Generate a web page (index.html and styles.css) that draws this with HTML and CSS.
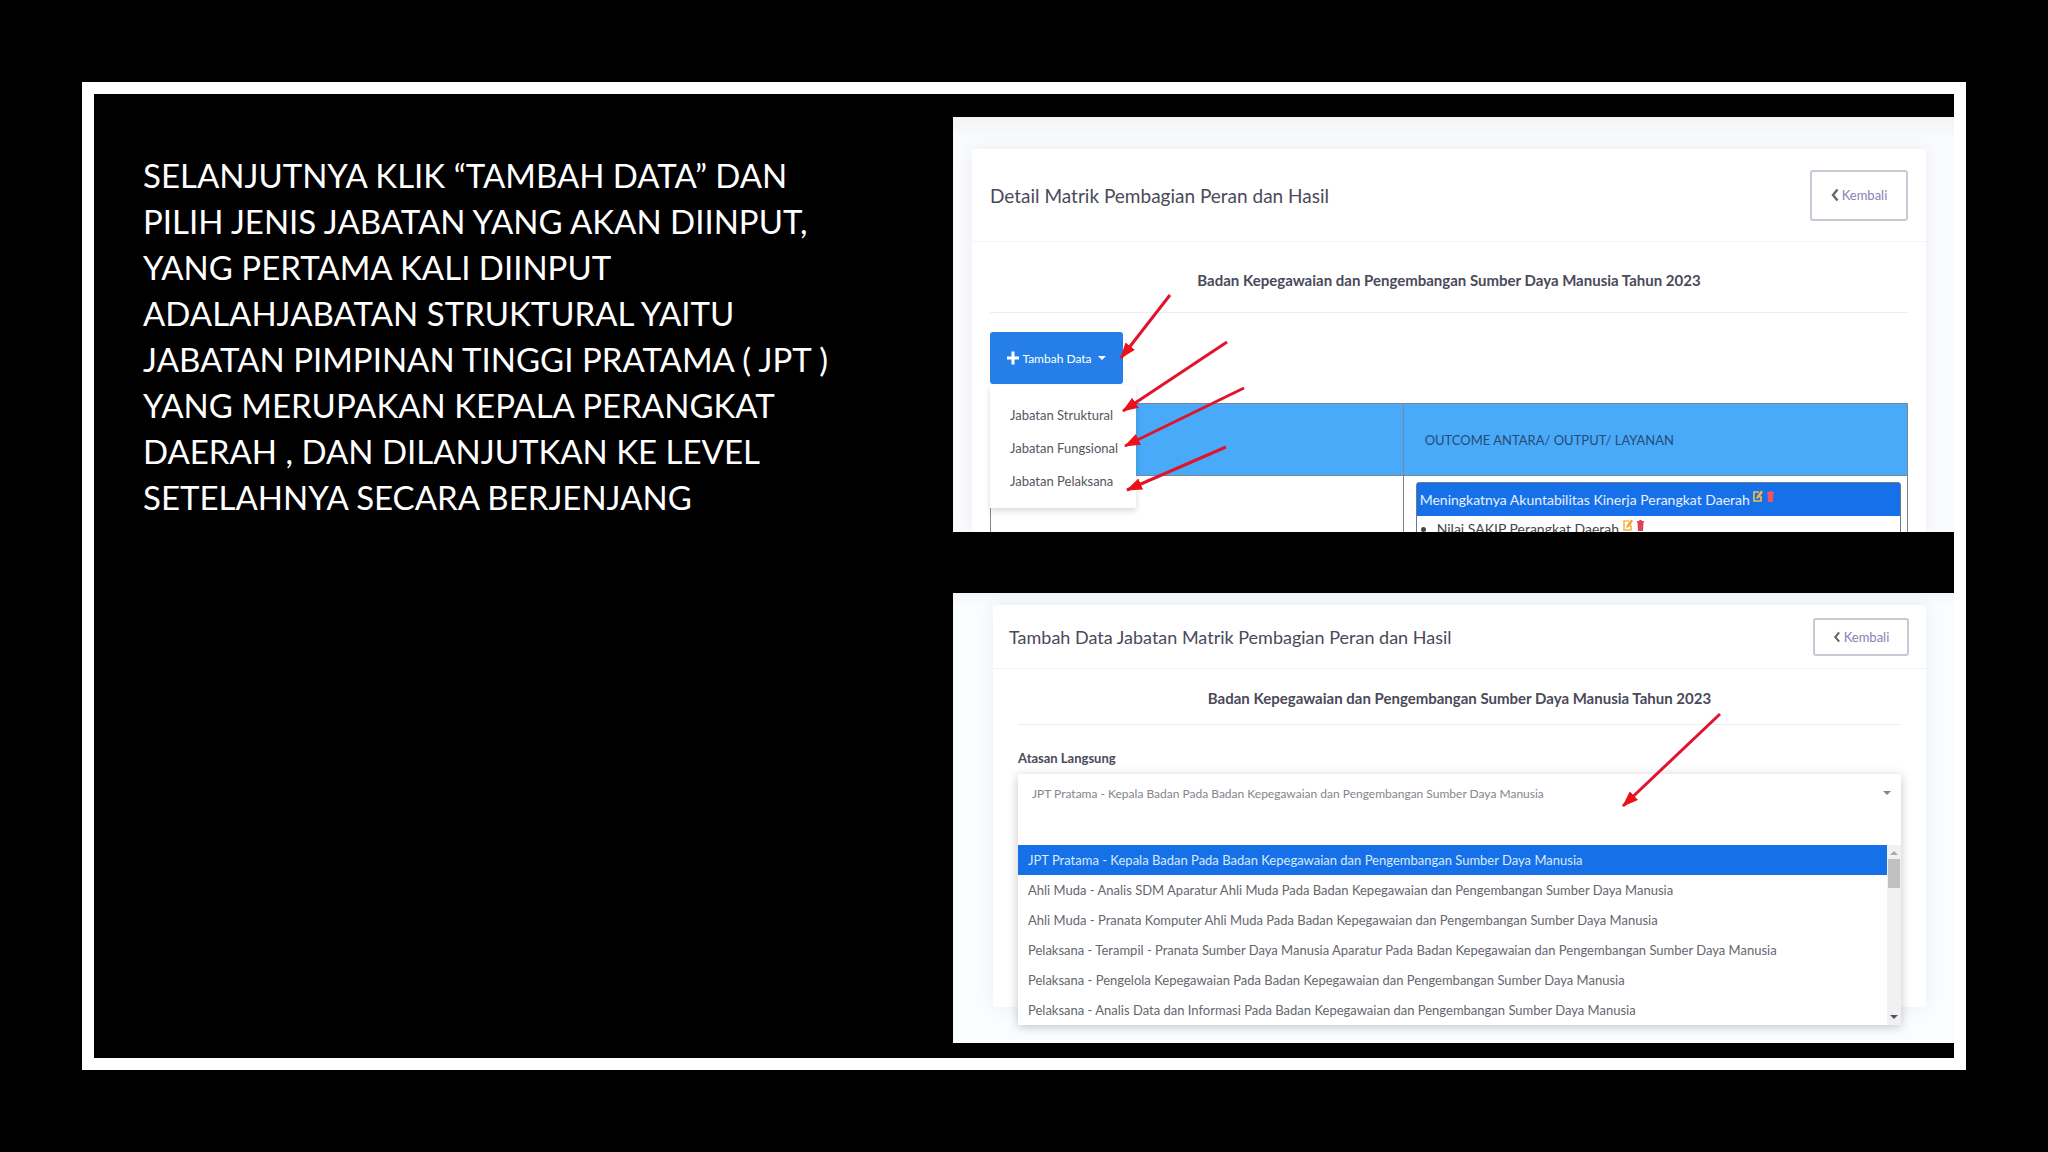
FILE: index.html
```html
<!DOCTYPE html>
<html lang="id">
<head>
    <meta charset="UTF-8">
    <meta name="viewport" content="width=device-width, initial-scale=1.0">
    <title>Tambah Data Jabatan</title>
    <link rel="stylesheet" href="styles.css">
</head>
<body>
    <main class="frame">
        <p class="instruction">
            SELANJUTNYA KLIK “TAMBAH DATA” DAN<br>
            PILIH JENIS JABATAN YANG AKAN DIINPUT,<br>
            YANG PERTAMA KALI DIINPUT<br>
            ADALAHJABATAN STRUKTURAL YAITU<br>
            JABATAN PIMPINAN TINGGI PRATAMA ( JPT )<br>
            YANG MERUPAKAN KEPALA PERANGKAT<br>
            DAERAH , DAN DILANJUTKAN KE LEVEL<br>
            SETELAHNYA SECARA BERJENJANG
        </p>

        <div class="shots">
            <!-- Detail matrik -->
            <section class="shot shot-detail">
                <div class="card">
                    <div class="card-header">
                        <h1>Detail Matrik Pembagian Peran dan Hasil</h1>
                        <button class="btn-back" type="button">
                            <svg viewBox="0 0 8 14" width="8" height="14"><path d="M6.5 1.5 L2 7 L6.5 12.5" fill="none" stroke="currentColor" stroke-width="2.4"/></svg>
                            Kembali
                        </button>
                    </div>
                    <div class="card-body">
                        <h2>Badan Kepegawaian dan Pengembangan Sumber Daya Manusia Tahun 2023</h2>
                        <div class="dropdown">
                            <button class="btn-add" type="button">
                                <svg viewBox="0 0 12 14" width="12" height="14"><path d="M6 0.5 V13.5 M0 7 H12" stroke="currentColor" stroke-width="3"/></svg>
                                Tambah Data
                                <span class="caret"></span>
                            </button>
                            <div class="dropdown-menu">
                                <a href="#">Jabatan Struktural</a>
                                <a href="#">Jabatan Fungsional</a>
                                <a href="#">Jabatan Pelaksana</a>
                            </div>
                        </div>
                        <table class="matrix">
                            <thead>
                                <tr>
                                    <th></th>
                                    <th>OUTCOME ANTARA/ OUTPUT/ LAYANAN</th>
                                </tr>
                            </thead>
                            <tbody>
                                <tr>
                                    <td></td>
                                    <td>
                                        <div class="outcome">
                                            <div class="outcome-title">
                                                Meningkatnya Akuntabilitas Kinerja Perangkat Daerah
                                                <svg class="icon" viewBox="0 0 22 12" width="22" height="12"><path d="M6 2 H1 V11 H8 V6" fill="none" stroke="#f2c14b" stroke-width="1.6"/><path d="M3 9 L4 6 L8 0.5 L10 2 L6 8 Z" fill="#f2b632"/><path d="M14 2 H16 L16.5 1 H18.500 L19 2 H21 V3.5 H14 Z M14.500 3.5 H20.500 L20 12 H15 Z" fill="#ea5463"/></svg>
                                            </div>
                                            <ul>
                                                <li>
                                                    Nilai SAKIP Perangkat Daerah
                                                    <svg class="icon" viewBox="0 0 22 12" width="22" height="12"><path d="M6 2 H1 V11 H8 V6" fill="none" stroke="#f2b64b" stroke-width="1.6"/><path d="M3 9 L4 6 L8 0.5 L10 2 L6 8 Z" fill="#f2a632"/><path d="M14 2 H16 L16.5 1 H18.500 L19 2 H21 V3.5 H14 Z M14.500 3.5 H20.500 L20 12 H15 Z" fill="#dc4355"/></svg>
                                                </li>
                                            </ul>
                                        </div>
                                    </td>
                                </tr>
                            </tbody>
                        </table>
                    </div>
                </div>
                <svg class="arrows" viewBox="0 0 1001 415">
                    <defs>
                        <marker id="head" viewBox="0 0 16 12" refX="15" refY="6" markerWidth="16" markerHeight="12" markerUnits="userSpaceOnUse" orient="auto">
                            <path d="M0 0 L16 6 L0 12 Z" fill="#ee1018"/>
                        </marker>
                    </defs>
                    <path d="M217 178 L168 241" marker-end="url(#head)"/>
                    <path d="M274 225 L170 294" marker-end="url(#head)"/>
                    <path d="M291 271 L172 329" marker-end="url(#head)"/>
                    <path d="M273 330 L174 373" marker-end="url(#head)"/>
                </svg>
            </section>

            <!-- Form tambah data -->
            <section class="shot shot-form">
                <div class="card">
                    <div class="card-header">
                        <h1>Tambah Data Jabatan Matrik Pembagian Peran dan Hasil</h1>
                        <button class="btn-back" type="button">
                            <svg viewBox="0 0 8 14" width="8" height="12"><path d="M6.5 1.5 L2 7 L6.5 12.5" fill="none" stroke="currentColor" stroke-width="2.4"/></svg>
                            Kembali
                        </button>
                    </div>
                    <div class="card-body">
                        <h2>Badan Kepegawaian dan Pengembangan Sumber Daya Manusia Tahun 2023</h2>
                        <label for="atasan">Atasan Langsung</label>
                        <div class="picker">
                            <div class="picker-control">
                                <select id="atasan">
                                    <option>JPT Pratama - Kepala Badan Pada Badan Kepegawaian dan Pengembangan Sumber Daya Manusia</option>
                                </select>
                                <span class="caret"></span>
                            </div>
                            <input class="picker-search" type="text" aria-label="Cari">
                            <div class="picker-list">
                                <ul role="listbox" aria-label="Atasan Langsung">
                                    <li role="option" class="active" aria-selected="true">JPT Pratama - Kepala Badan Pada Badan Kepegawaian dan Pengembangan Sumber Daya Manusia</li>
                                    <li role="option">Ahli Muda - Analis SDM Aparatur Ahli Muda Pada Badan Kepegawaian dan Pengembangan Sumber Daya Manusia</li>
                                    <li role="option">Ahli Muda - Pranata Komputer Ahli Muda Pada Badan Kepegawaian dan Pengembangan Sumber Daya Manusia</li>
                                    <li role="option">Pelaksana - Terampil - Pranata Sumber Daya Manusia Aparatur Pada Badan Kepegawaian dan Pengembangan Sumber Daya Manusia</li>
                                    <li role="option">Pelaksana - Pengelola Kepegawaian Pada Badan Kepegawaian dan Pengembangan Sumber Daya Manusia</li>
                                    <li role="option">Pelaksana - Analis Data dan Informasi Pada Badan Kepegawaian dan Pengembangan Sumber Daya Manusia</li>
                                </ul>
                                <div class="scrollbar">
                                    <span class="caret up"></span>
                                    <span class="thumb"></span>
                                    <span class="caret down"></span>
                                </div>
                            </div>
                        </div>
                    </div>
                </div>
                <svg class="arrows" viewBox="0 0 1001 450">
                    <path d="M767 121 L670 213" marker-end="url(#head)"/>
                </svg>
            </section>
        </div>
    </main>
</body>
</html>
```
FILE: styles.css
```css
* {
    margin: 0;
    padding: 0;
    box-sizing: border-box;
}

body {
    font-family: Lato, Carlito, sans-serif;
    background: #000;
    color: #4a4a5a;
    height: 100vh;
    padding: 82px;
    display: flex;
}

button, input, select {
    font-family: inherit;
}

.frame {
    flex: 1;
    border: 12px solid #fff;
    display: grid;
    grid-template-columns: 859fr 1001fr;
    grid-template-rows: minmax(0, 1fr);
}

.instruction {
    padding: 58px 0 0 49px;
    color: #fff;
    font-size: 33px;
    line-height: 46px;
    white-space: nowrap;
}

.shots {
    display: grid;
    grid-template-rows: minmax(0, 415fr) minmax(0, 450fr);
    gap: 61px;
    padding: 23px 0 15px;
}

.shot {
    position: relative;
    overflow: hidden;
    display: flex;
}

.shot-detail {
    padding: 32px 28px 0 19px;
    background: linear-gradient(#f3f4f6, #fafbfd 24px);
}

.shot-form {
    padding: 12px 28px 36px 40px;
    background: linear-gradient(#f5f6f8, #fafdfe 16px);
}

.card {
    flex: 1;
    min-width: 0;
    background: #fff;
    border-radius: 4px;
    box-shadow: 0 0 16px rgba(60, 70, 100, 0.08);
}

.card-header {
    display: flex;
    justify-content: space-between;
    align-items: center;
    border-bottom: 1px solid #f3f3f8;
}

h1 {
    font-weight: 400;
}

h2 {
    font-size: 15px;
    font-weight: 700;
    line-height: 20px;
    text-align: center;
    border-bottom: 1px solid #eeeef2;
}

.btn-back {
    display: flex;
    align-items: center;
    justify-content: center;
    gap: 3px;
    background: #fff;
    border: 2px solid #c9c9d6;
    border-radius: 3px;
    color: #8a80b8;
    font-size: 13px;
}

.btn-back svg {
    color: #666;
}

.caret {
    border: 4px solid transparent;
    border-top-color: currentColor;
    border-bottom: 0;
}

/* Detail matrik */
.shot-detail .card-header {
    height: 93px;
    padding: 0 18px;
}

.shot-detail h1 {
    font-size: 19px;
}

.shot-detail .btn-back {
    width: 98px;
    height: 51px;
}

.shot-detail .card-body {
    padding: 0 18px;
}

.shot-detail h2 {
    padding: 28px 0 22px;
}

.dropdown {
    position: relative;
    padding: 19px 0;
}

.btn-add {
    display: flex;
    align-items: center;
    justify-content: center;
    gap: 3px;
    width: 133px;
    height: 52px;
    background: #267fe8;
    border: none;
    border-radius: 3px;
    color: #fff;
    font-size: 12px;
}

.btn-add .caret {
    margin-left: 3px;
}

.dropdown-menu {
    position: absolute;
    top: 72px;
    left: 0;
    width: 146px;
    padding: 14px 0 10px;
    background: #fff;
    box-shadow: 0 3px 6px rgba(0, 0, 0, 0.15);
}

.dropdown-menu a {
    display: block;
    padding-left: 20px;
    color: #55555f;
    font-size: 13px;
    line-height: 33px;
    text-decoration: none;
}

.matrix {
    width: 100%;
    border-collapse: collapse;
    table-layout: fixed;
}

.matrix th, .matrix td {
    border: 1px solid #7d8794;
}

.matrix th {
    height: 72px;
    padding-left: 21px;
    background: #48aaf8;
    color: #2a4a72;
    font-size: 13px;
    font-weight: 400;
    text-align: left;
}

.matrix th:first-child {
    width: 45%;
}

.matrix td {
    padding: 6px 6px 6px 12px;
}

.outcome {
    border: 1px solid #6c7a8c;
    border-radius: 3px;
}

.outcome-title {
    padding-left: 3px;
    background: #1670ea;
    color: #e8f2ff;
    font-size: 14px;
    line-height: 33px;
    white-space: nowrap;
}

.outcome ul {
    padding-left: 20px;
    color: #44444c;
    font-size: 14px;
    line-height: 26px;
}

.icon {
    vertical-align: 3px;
}

/* Form tambah data */
.shot-form .card-header {
    height: 64px;
    padding: 0 17px 0 16px;
}

.shot-form h1 {
    font-size: 18px;
}

.shot-form .btn-back {
    width: 96px;
    height: 38px;
}

.shot-form .card-body {
    padding: 0 25px;
}

.shot-form h2 {
    padding: 19px 0 16px;
}

.shot-form label {
    display: block;
    padding-top: 23px;
    font-size: 13px;
    font-weight: 700;
    line-height: 20px;
}

.picker {
    position: relative;
    margin-top: 6px;
    background: #fff;
    box-shadow: 0 2px 10px rgba(0, 0, 0, 0.22);
}

.picker-control {
    display: flex;
    align-items: center;
    padding: 0 10px 0 14px;
    height: 38px;
    color: #85858c;
}

.picker-control select {
    flex: 1;
    appearance: none;
    border: none;
    background: none;
    color: inherit;
    font-size: 12px;
}

.picker-search {
    display: block;
    width: 100%;
    height: 33px;
    border: none;
    background: #fff;
}

.picker-list {
    display: flex;
}

.picker-list ul {
    flex: 1;
    list-style: none;
}

.picker-list li {
    padding-left: 10px;
    color: #66666e;
    font-size: 13px;
    line-height: 30px;
    white-space: nowrap;
}

.picker-list .active {
    background: #1670e8;
    color: #d8eaff;
}

.scrollbar {
    width: 14px;
    display: flex;
    flex-direction: column;
    align-items: center;
    padding: 6px 1px;
    background: #f1f1f3;
    color: #555;
}

.scrollbar .thumb {
    width: 100%;
    height: 29px;
    margin-top: 4px;
    background: #c1c1c1;
}

.scrollbar .up {
    transform: rotate(180deg);
    color: #aaa;
}

.scrollbar .down {
    margin-top: auto;
}

.arrows {
    position: absolute;
    top: 0;
    left: 0;
    width: 100%;
    pointer-events: none;
    fill: none;
    stroke: #e0142c;
    stroke-width: 3;
}

.arrows marker path {
    stroke: none;
}
```
